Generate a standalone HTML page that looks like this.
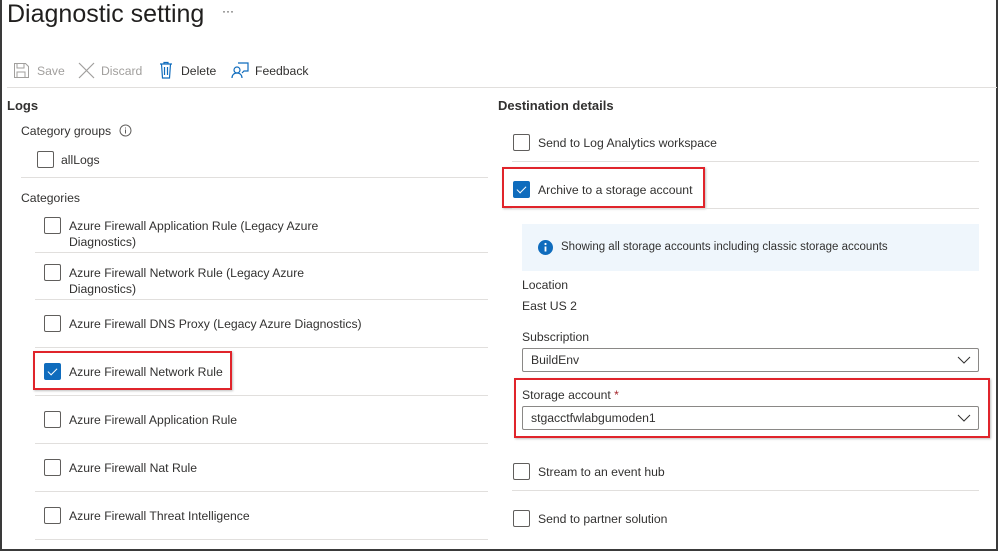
<!DOCTYPE html>
<html><head><meta charset="utf-8"><style>
*{margin:0;padding:0;box-sizing:border-box}
body{width:998px;height:552px;background:#fff;font-family:"Liberation Sans",sans-serif;color:#323130;position:relative;overflow:hidden;font-size:12.2px}
.a{position:absolute;white-space:nowrap}
.frame{position:absolute;left:0;top:-2px;width:998px;height:553px;border:2px solid #3a3a3a}
.cb{position:absolute;width:17px;height:17px;border:1px solid #605e5c;border-radius:2px;background:#fff}
.cb.on{background:#0f6cbd;border-color:#0f6cbd}
.cb.on:after{content:"";position:absolute;left:5px;top:2px;width:4px;height:8px;border:solid #fff;border-width:0 1.3px 1.3px 0;transform:rotate(45deg)}
.ln{position:absolute;height:1px;background:#e1dfdd}
.red{position:absolute;border:2px solid #e0242b;box-shadow:1px 1px 2px rgba(0,0,0,.25)}
.dd{position:absolute;border:1px solid #8a8886;border-radius:2px;height:24px;padding-left:8px;line-height:22px;font-size:12.2px}
.dd svg{position:absolute;right:7px;top:6px}
</style></head><body>
<div class="frame"></div>
<div class="a" style="left:7px;top:0px;font-size:25px;color:#201f1e">Diagnostic setting</div>
<div class="a" style="left:222px;top:4px;font-size:12px">···</div>

<svg class="a" style="left:13px;top:62px" width="17" height="17" viewBox="0 0 17 17"><path d="M1.5 1.5h11l3 3v11h-14z" fill="none" stroke="#a19f9d"/><rect x="4" y="1.5" width="7" height="4.5" fill="none" stroke="#a19f9d"/><rect x="4" y="10" width="8" height="5.5" fill="none" stroke="#a19f9d"/></svg>
<div class="a" style="left:37px;top:64px;color:#a19f9d">Save</div>
<svg class="a" style="left:78px;top:62px" width="17" height="17"><path d="M1 1L16 16M16 1L1 16" stroke="#a19f9d" stroke-width="1.2"/></svg>
<div class="a" style="left:101px;top:64px;color:#a19f9d">Discard</div>
<svg class="a" style="left:159px;top:61px" width="14" height="18"><path d="M1 3h12M5 3V1.5h4V3M2.5 3l1 14h7l1-14M5.5 6v8M8.5 6v8" fill="none" stroke="#0f6cbd" stroke-width="1.2"/></svg>
<div class="a" style="left:181px;top:64px">Delete</div>
<svg class="a" style="left:231px;top:61px" width="18" height="18"><path d="M7 2h10v8h-4l-2 2" fill="none" stroke="#0f6cbd" stroke-width="1.2"/><circle cx="6" cy="9" r="3" fill="none" stroke="#0f6cbd" stroke-width="1.2"/><path d="M1 17c0-3 2-5 5-5s5 2 5 5" fill="none" stroke="#0f6cbd" stroke-width="1.2"/></svg>
<div class="a" style="left:255px;top:64px">Feedback</div>
<div class="ln" style="left:7px;top:87px;width:990px"></div>

<div class="a" style="left:7px;top:98px;font-weight:bold;font-size:13px">Logs</div>
<div class="a" style="left:21px;top:124px">Category groups</div>
<svg class="a" style="left:119px;top:124px" width="13" height="13"><circle cx="6.5" cy="6.5" r="5.5" fill="none" stroke="#605e5c"/><path d="M6.5 5.5v4M6.5 3.5v1" stroke="#605e5c"/></svg>
<div class="cb" style="left:37px;top:151px"></div>
<div class="a" style="left:61px;top:153px">allLogs</div>
<div class="ln" style="left:21px;top:177px;width:467px"></div>
<div class="a" style="left:21px;top:191px">Categories</div>

<div class="cb" style="left:44px;top:217px"></div>
<div class="a" style="left:69px;top:219px;line-height:15.5px">Azure Firewall Application Rule (Legacy Azure<br>Diagnostics)</div>
<div class="ln" style="left:35px;top:252px;width:453px"></div>
<div class="cb" style="left:44px;top:264px"></div>
<div class="a" style="left:69px;top:266px;line-height:15.5px">Azure Firewall Network Rule (Legacy Azure<br>Diagnostics)</div>
<div class="ln" style="left:35px;top:299px;width:453px"></div>
<div class="cb" style="left:44px;top:315px"></div>
<div class="a" style="left:69px;top:317px">Azure Firewall DNS Proxy (Legacy Azure Diagnostics)</div>
<div class="ln" style="left:35px;top:347px;width:453px"></div>
<div class="red" style="left:33px;top:351px;width:199px;height:39px"></div>
<div class="cb on" style="left:44px;top:363px"></div>
<div class="a" style="left:69px;top:365px">Azure Firewall Network Rule</div>
<div class="ln" style="left:35px;top:395px;width:453px"></div>
<div class="cb" style="left:44px;top:411px"></div>
<div class="a" style="left:69px;top:413px">Azure Firewall Application Rule</div>
<div class="ln" style="left:35px;top:443px;width:453px"></div>
<div class="cb" style="left:44px;top:459px"></div>
<div class="a" style="left:69px;top:461px">Azure Firewall Nat Rule</div>
<div class="ln" style="left:35px;top:491px;width:453px"></div>
<div class="cb" style="left:44px;top:507px"></div>
<div class="a" style="left:69px;top:509px">Azure Firewall Threat Intelligence</div>
<div class="ln" style="left:35px;top:539px;width:453px"></div>

<div class="a" style="left:498px;top:98px;font-weight:bold;font-size:13px">Destination details</div>
<div class="cb" style="left:513px;top:134px"></div>
<div class="a" style="left:538px;top:136px">Send to Log Analytics workspace</div>
<div class="ln" style="left:512px;top:161px;width:467px"></div>
<div class="red" style="left:502px;top:167px;width:203px;height:41px"></div>
<div class="cb on" style="left:513px;top:181px"></div>
<div class="a" style="left:538px;top:183px">Archive to a storage account</div>
<div class="ln" style="left:512px;top:208px;width:467px"></div>
<div class="a" style="left:522px;top:224px;width:457px;height:47px;background:#eff6fc"></div>
<svg class="a" style="left:538px;top:240px" width="15" height="15"><circle cx="7.5" cy="7.5" r="7.5" fill="#0f6cbd"/><path d="M7.5 6.5v5" stroke="#fff" stroke-width="1.8"/><circle cx="7.5" cy="4" r="1.1" fill="#fff"/></svg>
<div class="a" style="left:561px;top:241px;font-size:11.5px">Showing all storage accounts including classic storage accounts</div>
<div class="a" style="left:522px;top:278px">Location</div>
<div class="a" style="left:522px;top:299px">East US 2</div>
<div class="a" style="left:522px;top:330px">Subscription</div>
<div class="dd" style="left:522px;top:348px;width:457px">BuildEnv<svg width="14" height="10"><path d="M1 2l6 6 6-6" fill="none" stroke="#323130"/></svg></div>
<div class="red" style="left:514px;top:378px;width:476px;height:60px"></div>
<div class="a" style="left:522px;top:388px">Storage account <span style="color:#a4262c">*</span></div>
<div class="dd" style="left:522px;top:406px;width:457px">stgacctfwlabgumoden1<svg width="14" height="10"><path d="M1 2l6 6 6-6" fill="none" stroke="#323130"/></svg></div>
<div class="cb" style="left:513px;top:463px"></div>
<div class="a" style="left:538px;top:465px">Stream to an event hub</div>
<div class="ln" style="left:512px;top:490px;width:467px"></div>
<div class="cb" style="left:513px;top:510px"></div>
<div class="a" style="left:538px;top:512px">Send to partner solution</div>
</body></html>
